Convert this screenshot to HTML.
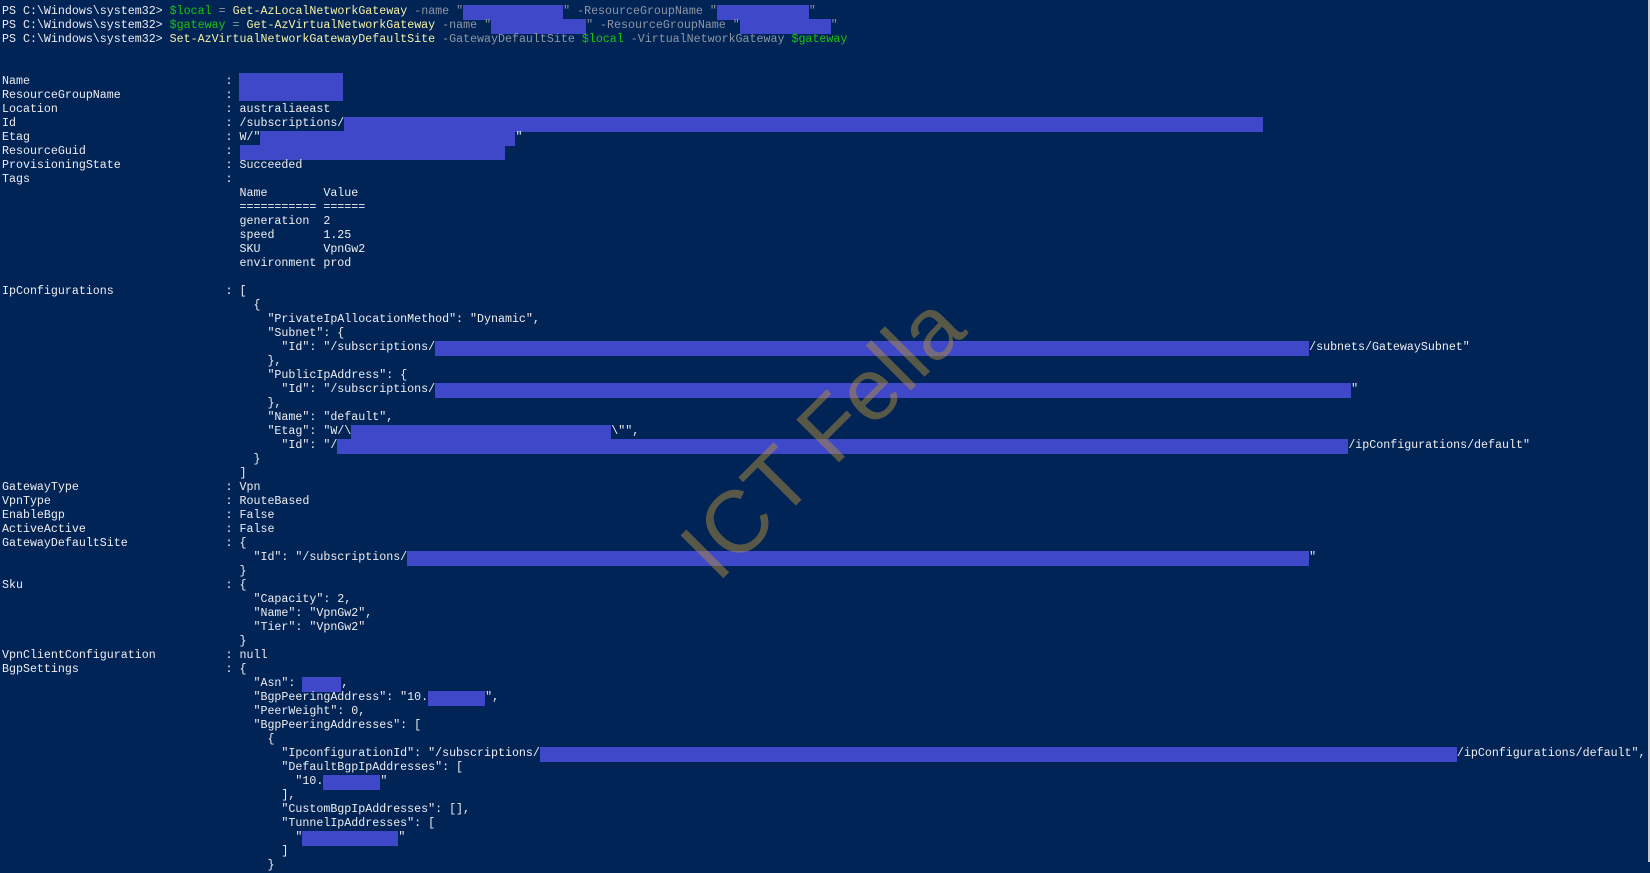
<!DOCTYPE html>
<html><head><meta charset="utf-8"><style>
html,body{margin:0;padding:0;background:#012456;width:1650px;height:862px;overflow:hidden}
#t{position:absolute;left:2px;top:5px;font-family:"Liberation Mono",monospace;font-size:11.65px;line-height:14px;color:#eeedf0}
#t div{height:14px;white-space:pre}
.r{display:inline-block;height:15px;vertical-align:top;background:#3f48c8}
.y{color:#f9f1a5}.g{color:#16c60c}.d{color:#8f96a4}
.b{position:absolute;background:#3f48c8}
#wm{position:absolute;left:822px;top:437px;transform:translate(-50%,-50%) rotate(-45deg);font-family:"Liberation Sans",sans-serif;font-size:88px;color:rgba(175,140,60,0.5);white-space:nowrap}
#edge{position:absolute;right:0;top:0;width:2px;height:862px;background:#c8c8c8}
</style></head><body>
<div id="t"><div>PS C:\Windows\system32&gt; <span class="g">$local</span> <span class="d">=</span> <span class="y">Get-AzLocalNetworkGateway</span> <span class="d">-name "</span><span class="r" style="width:100px"></span><span class="d">" -ResourceGroupName "</span><span class="r" style="width:92px"></span><span class="d">"</span></div><div>PS C:\Windows\system32&gt; <span class="g">$gateway</span> <span class="d">=</span> <span class="y">Get-AzVirtualNetworkGateway</span> <span class="d">-name "</span><span class="r" style="width:95px"></span><span class="d">" -ResourceGroupName "</span><span class="r" style="width:91px"></span><span class="d">"</span></div><div>PS C:\Windows\system32&gt; <span class="y">Set-AzVirtualNetworkGatewayDefaultSite</span> <span class="d">-GatewayDefaultSite</span> <span class="g">$local</span> <span class="d">-VirtualNetworkGateway</span> <span class="g">$gateway</span></div><div></div><div></div><div>Name                            : </div><div>ResourceGroupName               : </div><div>Location                        : australiaeast</div><div>Id                              : /subscriptions/<span class="r" style="width:919px"></span></div><div>Etag                            : W/"<span class="r" style="width:255px"></span>"</div><div>ResourceGuid                    : <span class="r" style="width:265px"></span></div><div>ProvisioningState               : Succeeded</div><div>Tags                            : </div><div>                                  Name        Value</div><div>                                  =========== ======</div><div>                                  generation  2</div><div>                                  speed       1.25</div><div>                                  SKU         VpnGw2</div><div>                                  environment prod</div><div></div><div>IpConfigurations                : [</div><div>                                    {</div><div>                                      "PrivateIpAllocationMethod": "Dynamic",</div><div>                                      "Subnet": {</div><div>                                        "Id": "/subscriptions/<span class="r" style="width:874px"></span>/subnets/GatewaySubnet"</div><div>                                      },</div><div>                                      "PublicIpAddress": {</div><div>                                        "Id": "/subscriptions/<span class="r" style="width:916px"></span>"</div><div>                                      },</div><div>                                      "Name": "default",</div><div>                                      "Etag": "W/\<span class="r" style="width:260px"></span>\"",</div><div>                                        "Id": "/<span class="r" style="width:1011px"></span>/ipConfigurations/default"</div><div>                                    }</div><div>                                  ]</div><div>GatewayType                     : Vpn</div><div>VpnType                         : RouteBased</div><div>EnableBgp                       : False</div><div>ActiveActive                    : False</div><div>GatewayDefaultSite              : {</div><div>                                    "Id": "/subscriptions/<span class="r" style="width:902px"></span>"</div><div>                                  }</div><div>Sku                             : {</div><div>                                    "Capacity": 2,</div><div>                                    "Name": "VpnGw2",</div><div>                                    "Tier": "VpnGw2"</div><div>                                  }</div><div>VpnClientConfiguration          : null</div><div>BgpSettings                     : {</div><div>                                    "Asn": <span class="r" style="width:39px"></span>,</div><div>                                    "BgpPeeringAddress": "10.<span class="r" style="width:57px"></span>",</div><div>                                    "PeerWeight": 0,</div><div>                                    "BgpPeeringAddresses": [</div><div>                                      {</div><div>                                        "IpconfigurationId": "/subscriptions/<span class="r" style="width:917px"></span>/ipConfigurations/default",</div><div>                                        "DefaultBgpIpAddresses": [</div><div>                                          "10.<span class="r" style="width:57px"></span>"</div><div>                                        ],</div><div>                                        "CustomBgpIpAddresses": [],</div><div>                                        "TunnelIpAddresses": [</div><div>                                          "<span class="r" style="width:96px"></span>"</div><div>                                        ]</div><div>                                      }</div></div>
<div class="b" style="left:239px;top:73px;width:104px;height:28px"></div>
<div id="wm">ICT Fella</div>
<div id="edge"></div>
</body></html>
